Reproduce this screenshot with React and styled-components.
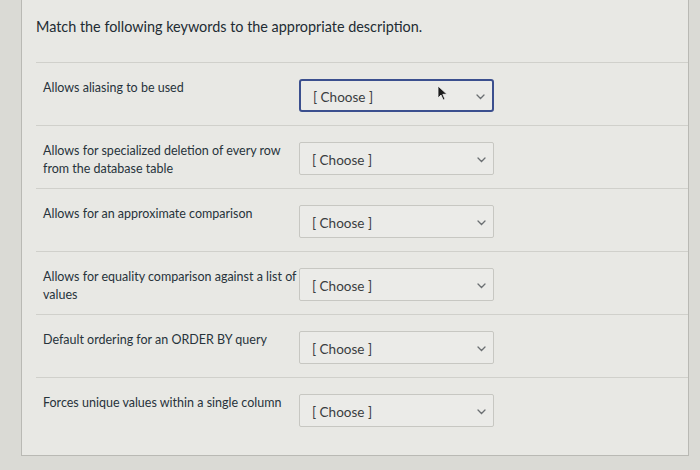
import React from "react";
import styled, {createGlobalStyle} from "styled-components";

const items = [
    {label: "Allows aliasing to be used", focused: true},
    {label: "Allows for specialized deletion of every row from the database table"},
    {label: "Allows for an approximate comparison"},
    {label: "Allows for equality comparison against a list of values"},
    {label: "Default ordering for an ORDER BY query"},
    {label: "Forces unique values within a single column"},
];

const Chevron = () => (
    <svg width="9" height="6" viewBox="0 0 9 6" fill="none">
        <path d="M1 1l3.5 3.5L8 1" stroke="#6b6f72" strokeWidth="1.3" strokeLinecap="round"/>
    </svg>
);

const Pointer = () => (
    <svg width="11" height="16" viewBox="0 0 11 16">
        <path d="M1 1v12l3-3 2.2 5 1.8-.8L5.8 9.3H10z" fill="#1c1c1c" stroke="#f2f2f2" strokeWidth="0.8"/>
    </svg>
);

const App = () => {
    return (
        <>
            <GlobalStyle/>
            <Panel>
                <Title>Match the following keywords to the appropriate description.</Title>
                <List>
                    {items.map((item) => (
                        <Row key={item.label}>
                            <Label>{item.label}</Label>
                            <Select focused={item.focused}>
                                <span>[ Choose ]</span>
                                {item.focused && (
                                    <Cursor>
                                        <Pointer/>
                                    </Cursor>
                                )}
                                <Chevron/>
                            </Select>
                        </Row>
                    ))}
                </List>
            </Panel>
        </>
    );
};

const GlobalStyle = createGlobalStyle`
  html, body {
    margin: 0;
    background: #dadad5;
    font-family: Lato, "Open Sans", sans-serif;
    color: #2d3b45;
  }
`;

const Panel = styled.div`
  box-sizing: border-box;
  margin: 0 11px 0 21px;
  height: 456px;
  background: #e8e8e4;
  border: 1px solid #b9b9b4;
  border-top: none;
  padding: 16px 0 0 14px;
`;

const Title = styled.h1`
  margin: 0;
  font-size: 14.4px;
  font-weight: 400;
  line-height: 22px;
  color: #222c33;
`;

const List = styled.ul`
  margin: 24px 0 0;
  padding: 0;
  list-style: none;
  border-top: 1px solid #d0d0cb;
`;

const Row = styled.li`
  box-sizing: border-box;
  height: 63px;
  display: flex;
  align-items: flex-start;
  padding: 16px 0 0 7px;
  border-bottom: 1px solid #d0d0cb;

  &:last-child {
    border-bottom: none;
  }
`;

const Label = styled.div`
  width: 256px;
  font-size: 12.5px;
  line-height: 18px;
  color: #27333b;
`;

const Select = styled.div`
  position: relative;
  box-sizing: border-box;
  width: 195px;
  height: 33px;
  display: flex;
  align-items: center;
  justify-content: space-between;
  padding: 2px 7px 0 12px;
  background: #ebebe8;
  border: ${(p) => (p.focused ? "2px solid #3b4f8e" : "1px solid #c7c7c2")};
  border-radius: ${(p) => (p.focused ? "3px" : "2px")};
  font-size: 13.5px;
  color: #3a3d40;
`;

const Cursor = styled.span`
  position: absolute;
  left: 136px;
  top: 4px;
  line-height: 0;
`;

export default App;
